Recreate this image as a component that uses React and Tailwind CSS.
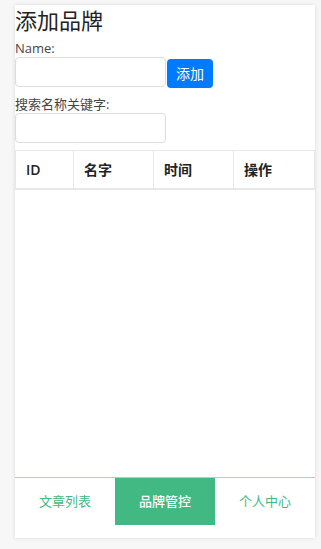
export default function App() {
  const font = { fontFamily: '"Open Sans", "Noto Sans CJK SC", sans-serif' };
  return (
    <div className="w-[321px] h-[549px] bg-[#f7f7f7] pt-[5px]" style={font}>
      <div className="ml-[15px] w-[300px] h-[533px] bg-white shadow-[0_0_4px_rgba(0,0,0,0.12)] flex flex-col">
        <h3 className="text-[22px] leading-[28px] text-[#222] mt-[1px]">添加品牌</h3>
        <div className="text-[13px] leading-[14px] text-[#444] mt-[7px]">Name:</div>
        <div className="flex items-start mt-[2px] h-[31px]">
          <input className="block w-[151px] h-[30px] border border-[#dcdcdc] rounded-[4px] outline-none" />
          <button className="ml-[1px] mt-[2px] w-[46px] h-[29px] bg-[#007bff] text-white text-[14px] rounded-[4px] flex items-center justify-center">
            添加
          </button>
        </div>
        <div className="text-[13px] leading-[14px] text-[#444] mt-[9px]">搜索名称关键字:</div>
        <input className="block mt-[2px] w-[151px] h-[30px] border border-[#dcdcdc] rounded-[4px] outline-none" />
        <div className="mt-[7px] w-[300px] flex-1 flex flex-col">
          <div className="flex h-[40px] border border-[#e8e8e8] border-b-2 text-[14px] font-semibold text-[#222]">
            <div className="w-[58px] border-r border-[#e8e8e8] pl-[10px] flex items-center">ID</div>
            <div className="w-[80px] border-r border-[#e8e8e8] pl-[10px] flex items-center">名字</div>
            <div className="w-[80px] border-r border-[#e8e8e8] pl-[10px] flex items-center">时间</div>
            <div className="flex-1 pl-[10px] flex items-center">操作</div>
          </div>
          <div className="flex-1"></div>
        </div>
        <div className="h-px bg-[#9fd8bf]"></div>
        <div className="flex h-[47px] text-[13px] mb-[13px]">
          <div className="w-[100px] flex items-center justify-center text-[#42b983]">文章列表</div>
          <div className="w-[100px] flex items-center justify-center bg-[#42b983] text-white font-medium">品牌管控</div>
          <div className="w-[100px] flex items-center justify-center text-[#42b983]">个人中心</div>
        </div>
      </div>
    </div>
  );
}
